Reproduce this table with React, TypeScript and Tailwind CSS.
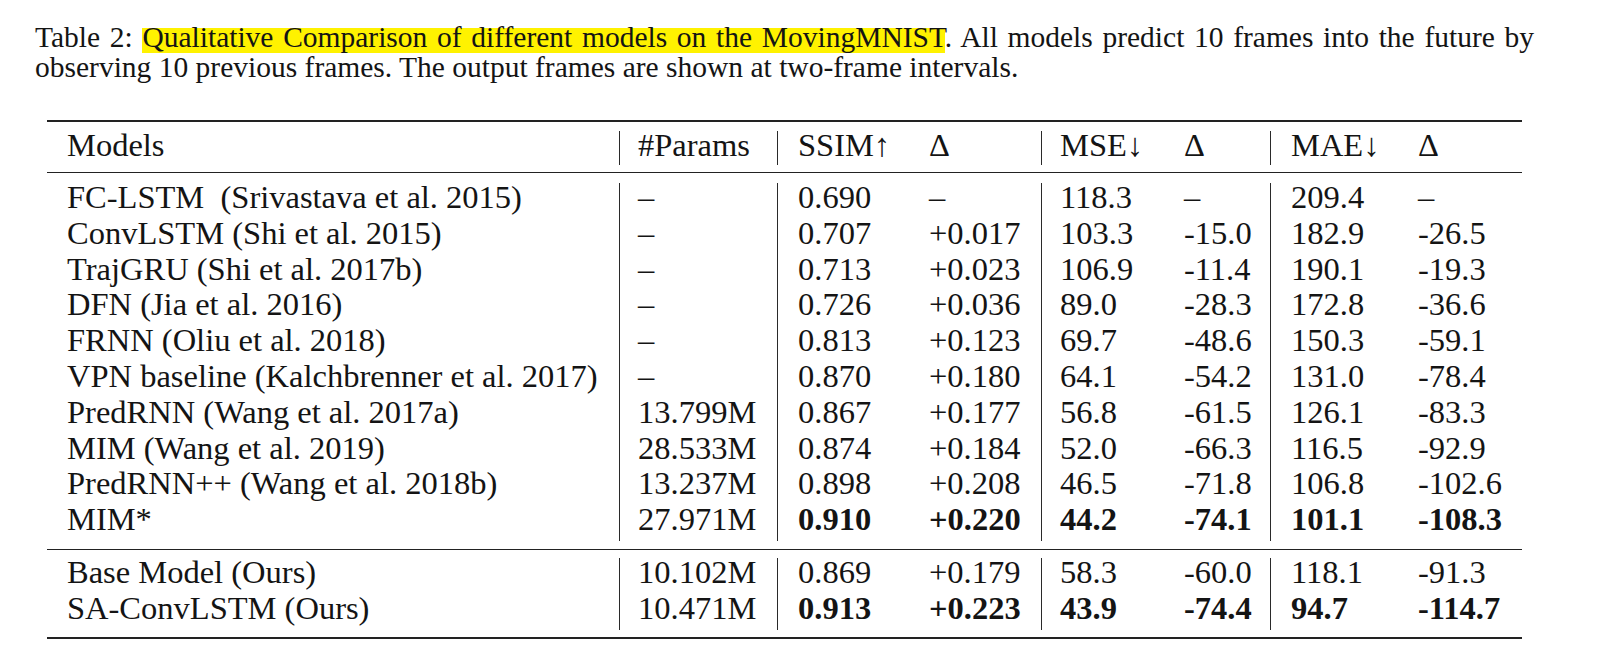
import React from "react";

type Cell = string | { b: string };

const rows1: Cell[][] = [
  ["FC-LSTM\u2002(Srivastava et al. 2015)", "–", "0.690", "–", "118.3", "–", "209.4", "–"],
  ["ConvLSTM (Shi et al. 2015)", "–", "0.707", "+0.017", "103.3", "-15.0", "182.9", "-26.5"],
  ["TrajGRU (Shi et al. 2017b)", "–", "0.713", "+0.023", "106.9", "-11.4", "190.1", "-19.3"],
  ["DFN (Jia et al. 2016)", "–", "0.726", "+0.036", "89.0", "-28.3", "172.8", "-36.6"],
  ["FRNN (Oliu et al. 2018)", "–", "0.813", "+0.123", "69.7", "-48.6", "150.3", "-59.1"],
  ["VPN baseline (Kalchbrenner et al. 2017)", "–", "0.870", "+0.180", "64.1", "-54.2", "131.0", "-78.4"],
  ["PredRNN (Wang et al. 2017a)", "13.799M", "0.867", "+0.177", "56.8", "-61.5", "126.1", "-83.3"],
  ["MIM (Wang et al. 2019)", "28.533M", "0.874", "+0.184", "52.0", "-66.3", "116.5", "-92.9"],
  ["PredRNN++ (Wang et al. 2018b)", "13.237M", "0.898", "+0.208", "46.5", "-71.8", "106.8", "-102.6"],
  ["MIM*", "27.971M", { b: "0.910" }, { b: "+0.220" }, { b: "44.2" }, { b: "-74.1" }, { b: "101.1" }, { b: "-108.3" }],
];

const rows2: Cell[][] = [
  ["Base Model (Ours)", "10.102M", "0.869", "+0.179", "58.3", "-60.0", "118.1", "-91.3"],
  ["SA-ConvLSTM (Ours)", "10.471M", { b: "0.913" }, { b: "+0.223" }, { b: "43.9" }, { b: "-74.4" }, { b: "94.7" }, { b: "-114.7" }],
];

const header: Cell[] = ["Models", "#Params", "SSIM\u2191", "\u0394", "MSE\u2193", "\u0394", "MAE\u2193", "\u0394"];

const colCls = [
  "pl-[20px]",
  "border-l border-[#2a2a2a] pl-[18px]",
  "border-l border-[#2a2a2a] pl-[20px]",
  "pl-[20px]",
  "border-l border-[#2a2a2a] pl-[18px]",
  "pl-[20px]",
  "border-l border-[#2a2a2a] pl-[20px]",
  "pl-[20px]",
];

function Row({ cells, h }: { cells: Cell[]; h: string }) {
  return (
    <div className={`grid grid-cols-[572px_158px_132px_132px_123px_106px_128px_124px] ${h}`}>
      {cells.map((c, i) => (
        <div key={i} className={`whitespace-nowrap leading-[28px] ${colCls[i]}`}>
          {typeof c === "string" ? c : <span className="font-bold">{c.b}</span>}
        </div>
      ))}
    </div>
  );
}

export default function App() {
  return (
    <div
      className="w-[1597px] h-[660px] bg-white text-[#141414] pt-[22px]"
      style={{ fontFamily: '"Liberation Serif", "Times New Roman", serif' }}
    >
      <p className="ml-[35px] w-[1499px] text-[29.5px] leading-[30px] text-justify">
        Table 2:{" "}
        <span className="bg-[linear-gradient(to_bottom,transparent_7px,#fff200_7px,#fff200_33px,transparent_33px)]">
          Qualitative Comparison of different models on the MovingMNIST
        </span>
        . All models predict 10 frames into the future by observing 10 previous frames. The output frames are shown
        at two-frame intervals.
      </p>

      <div className="ml-[47px] mt-[38px] w-[1475px] text-[32.5px]">
        <div className="h-[2px] bg-[#222]" />
        <div className="pt-[9px] pb-[7px]">
          <Row cells={header} h="h-[34px]" />
        </div>
        <div className="h-[1px] bg-[#222]" />
        <div className="pt-[10px] pb-[8px]">
          {rows1.map((r, i) => (
            <Row key={i} cells={r} h="h-[35.8px]" />
          ))}
        </div>
        <div className="h-[1px] bg-[#222]" />
        <div className="pt-[8px] pb-[7px]">
          {rows2.map((r, i) => (
            <Row key={i} cells={r} h="h-[36px]" />
          ))}
        </div>
        <div className="h-[2px] bg-[#222]" />
      </div>
    </div>
  );
}
